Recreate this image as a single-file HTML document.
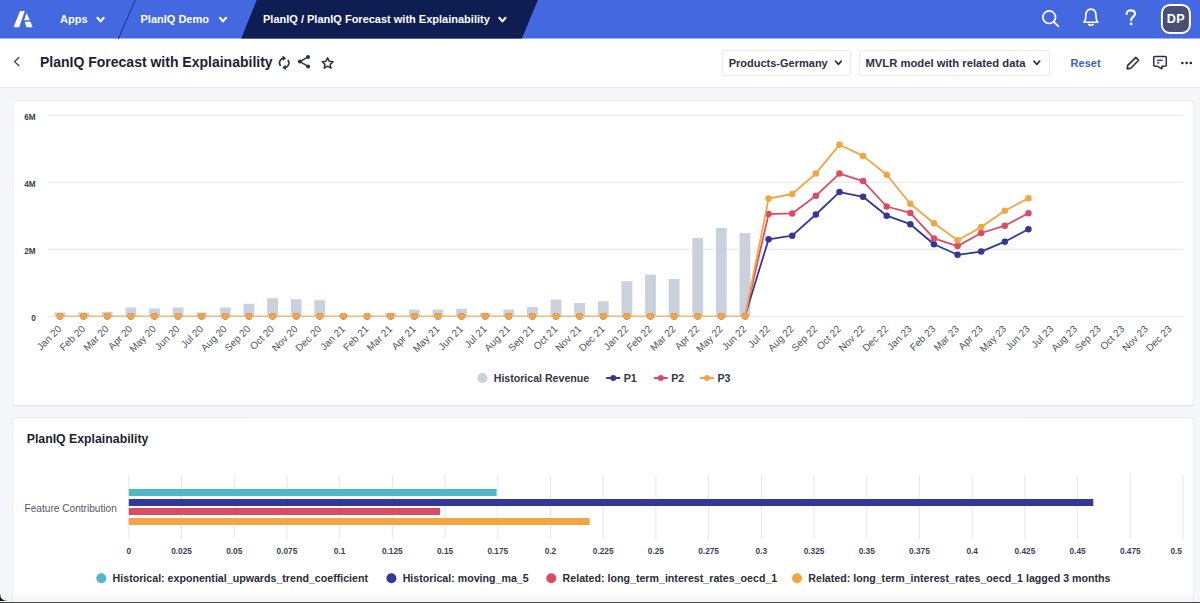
<!DOCTYPE html>
<html><head><meta charset="utf-8"><style>
*{box-sizing:border-box}
html,body{margin:0;padding:0}
body{width:1200px;height:603px;overflow:hidden;position:relative;background:#f6f7fb;font-family:"Liberation Sans",sans-serif}
.t{position:absolute;white-space:nowrap;line-height:1}
.card{position:absolute;background:#fff;border-radius:3px;box-shadow:0 0 0 0.7px #e8e9ef, 0 1px 1.5px rgba(40,45,70,0.14)}
</style></head><body>

<svg width="1200" height="39" style="position:absolute;left:0;top:0">
<rect width="1200" height="38.5" fill="#4468e0"/>
<polygon points="256.7,0 537.9,0 521.9,38.5 241.2,38.5" fill="#0e1e53"/>
<line x1="135.2" y1="0" x2="118.2" y2="39" stroke="#223a9c" stroke-width="1.1"/>
<!-- logo -->
<polygon points="20.1,10.9 24.8,10.9 19.1,27.3 13.5,27.3" fill="#fff"/>
<polygon points="26.5,13.1 29.9,20.2 24.1,20.2" fill="#fff"/>
<polygon points="24.6,21.8 30.5,21.8 32.6,27.3 26.6,27.3" fill="#fff"/>
<path d="M97.5,17.8 L100.6,21.400000000000002 L103.7,17.8" fill="none" stroke="#fff" stroke-width="2.1" stroke-linecap="round" stroke-linejoin="round"/>
<path d="M219.9,17.8 L223.0,21.400000000000002 L226.1,17.8" fill="none" stroke="#fff" stroke-width="2.1" stroke-linecap="round" stroke-linejoin="round"/>
<path d="M499.3,17.8 L502.40000000000003,21.400000000000002 L505.5,17.8" fill="none" stroke="#fff" stroke-width="2.1" stroke-linecap="round" stroke-linejoin="round"/>
<!-- search -->
<circle cx="1049.2" cy="17.2" r="6.3" fill="none" stroke="#fff" stroke-width="1.7"/>
<line x1="1053.8" y1="21.8" x2="1058.4" y2="26.3" stroke="#fff" stroke-width="1.8" stroke-linecap="round"/>
<!-- bell -->
<path d="M1083.9,22.2 C1085.6,20.6 1085.8,19 1085.8,15.9 C1085.8,11.5 1088,9.1 1090.9,9.1 C1093.8,9.1 1096,11.5 1096,15.9 C1096,19 1096.2,20.6 1097.9,22.2 Z" fill="none" stroke="#fff" stroke-width="1.6" stroke-linejoin="round"/>
<path d="M1088.7,24.3 Q1090.9,26.4 1093.1,24.3" fill="none" stroke="#fff" stroke-width="1.6" stroke-linecap="round"/>
<!-- question -->
<path d="M1126.6,13.9 C1126.6,11.5 1128.5,10.4 1130.7,10.4 C1133.1,10.4 1135,11.8 1135,14 C1135,16.5 1131.1,16.9 1131.1,20.3" fill="none" stroke="#fff" stroke-width="2.1" stroke-linecap="round"/>
<circle cx="1131.1" cy="23.9" r="1.35" fill="#fff"/>
<!-- avatar -->
<rect x="1161.9" y="4.95" width="28" height="28" rx="8" fill="#4a5074" stroke="#fff" stroke-width="2"/>
<text x="1176" y="23.3" text-anchor="middle" font-size="12.6" font-weight="700" fill="#fff" font-family="Liberation Sans" letter-spacing="0.5">DP</text>
</svg>
<div style="position:absolute;left:0;top:38.5px;width:1200px;height:49px;background:#fff;border-bottom:1px solid #e7e8ee"></div>
<span class="t" style="left:60px;top:13.6px;font-size:11px;font-weight:700;color:#fff">Apps</span>
<span class="t" style="left:140.5px;top:13.6px;font-size:11px;font-weight:700;color:#fff">PlanIQ Demo</span>
<span class="t" style="left:263px;top:13.6px;font-size:11px;font-weight:700;color:#fff">PlanIQ / PlanIQ Forecast with Explainability</span>
<span class="t" style="left:40px;top:54.5px;font-size:14px;font-weight:700;color:#1c1f30">PlanIQ Forecast with Explainability</span>
<div style="position:absolute;left:722px;top:50px;width:129px;height:26px;border:1px solid #e9ebf0;border-radius:2px;background:#fff"></div>
<span class="t" style="left:728.7px;top:58px;font-size:11px;font-weight:700;color:#2b3046">Products-Germany</span>
<div style="position:absolute;left:858.5px;top:50px;width:191px;height:26px;border:1px solid #e9ebf0;border-radius:2px;background:#fff"></div>
<span class="t" style="left:865.4px;top:58px;font-size:11.25px;font-weight:700;color:#2b3046">MVLR model with related data</span>
<span class="t" style="left:1070.6px;top:58px;font-size:11px;font-weight:700;color:#3f5cc2">Reset</span>
<div class="card" style="left:12.8px;top:100.8px;width:1180px;height:304.4px"></div>
<div class="card" style="left:12.8px;top:417.6px;width:1180px;height:200px"></div>
<span class="t" style="left:26.7px;top:433px;font-size:12.3px;font-weight:700;color:#1c1f30">PlanIQ Explainability</span>
<svg width="1200" height="603" style="position:absolute;left:0;top:0" font-family="Liberation Sans">
<!-- title bar icons -->
<path d="M19.2,57.2 L14.6,61.6 L19.2,66" fill="none" stroke="#3a3d4e" stroke-width="1.3" stroke-linecap="butt" stroke-linejoin="miter"/>
<!-- sync -->
<g transform="translate(284.2,62.9)" fill="none" stroke="#2b3046" stroke-width="1.6">
<path d="M0.5,-4.7 A4.7,4.7 0 0 0 -3.6,3"/>
<path d="M3.6,-3 A4.7,4.7 0 0 1 -0.5,4.7"/>
<path d="M-1.3,-6.9 L1.5,-4.7 L-1.3,-2.5 Z" fill="#2b3046" stroke-width="0.6" stroke-linejoin="round"/>
<path d="M1.3,6.9 L-1.5,4.7 L1.3,2.5 Z" fill="#2b3046" stroke-width="0.6" stroke-linejoin="round"/>
</g>
<!-- share -->
<g fill="#2b3046" stroke="#2b3046">
<line x1="308.1" y1="56.9" x2="299.9" y2="61.6" stroke-width="1.5"/>
<line x1="308.1" y1="66.4" x2="299.9" y2="61.6" stroke-width="1.5"/>
<circle cx="308.1" cy="56.9" r="2" stroke="none"/>
<circle cx="299.9" cy="61.6" r="2" stroke="none"/>
<circle cx="308.1" cy="66.4" r="2" stroke="none"/>
</g>
<!-- star -->
<polygon points="327.60,57.70 329.19,61.32 333.12,61.71 330.17,64.33 331.01,68.19 327.60,66.20 324.19,68.19 325.03,64.33 322.08,61.71 326.01,61.32" fill="none" stroke="#2b3046" stroke-width="1.5" stroke-linejoin="round"/>
<!-- pencil -->
<path d="M1135.8,57.4 L1138.6,60.3 L1130.8,68.3 L1127.3,68.9 L1127.7,65.4 Z" fill="none" stroke="#2b3046" stroke-width="1.6" stroke-linejoin="round"/>
<!-- comment -->
<path d="M1155,56.4 L1165,56.4 Q1166.3,56.4 1166.3,57.7 L1166.3,65 Q1166.3,66.3 1165,66.3 L1162,66.3 L1162,68.8 L1157.6,66.3 L1155,66.3 Q1153.7,66.3 1153.7,65 L1153.7,57.7 Q1153.7,56.4 1155,56.4 Z" fill="none" stroke="#2b3046" stroke-width="1.5" stroke-linejoin="round"/>
<line x1="1157" y1="60.3" x2="1162.7" y2="60.3" stroke="#2b3046" stroke-width="1.3"/>
<line x1="1157" y1="62.8" x2="1159.4" y2="62.8" stroke="#2b3046" stroke-width="1.3"/>
<!-- dots -->
<circle cx="1182.4" cy="63" r="1.25" fill="#1c1f30"/>
<circle cx="1186.6" cy="63" r="1.25" fill="#1c1f30"/>
<circle cx="1190.8" cy="63" r="1.25" fill="#1c1f30"/>
<!-- bottom-left frame corner -->
<path d="M0,593 Q0,601 8,601 L0,601 Z" fill="#1a1a1a"/>
<path d="M835.5,61.1 L838.4,64.4 L841.3,61.1" fill="none" stroke="#2b3046" stroke-width="1.6" stroke-linecap="round" stroke-linejoin="round"/>
<path d="M1033.9,61.1 L1036.8000000000002,64.4 L1039.7,61.1" fill="none" stroke="#2b3046" stroke-width="1.6" stroke-linecap="round" stroke-linejoin="round"/>
<line x1="48" y1="316.25" x2="1183" y2="316.25" stroke="#e6e6e6" stroke-width="1"/>
<text x="35.7" y="320.85" text-anchor="end" font-size="8.2" font-weight="700" fill="#3a3d4c">0</text>
<line x1="48" y1="249.25" x2="1183" y2="249.25" stroke="#e6e6e6" stroke-width="1"/>
<text x="35.7" y="253.85" text-anchor="end" font-size="8.2" font-weight="700" fill="#3a3d4c">2M</text>
<line x1="48" y1="182.25" x2="1183" y2="182.25" stroke="#e6e6e6" stroke-width="1"/>
<text x="35.7" y="186.85" text-anchor="end" font-size="8.2" font-weight="700" fill="#3a3d4c">4M</text>
<line x1="48" y1="115.25" x2="1183" y2="115.25" stroke="#e6e6e6" stroke-width="1"/>
<text x="35.7" y="119.85" text-anchor="end" font-size="8.2" font-weight="700" fill="#3a3d4c">6M</text>
<rect x="54.60" y="312.50" width="10.8" height="3.75" fill="#c9d1dc"/>
<rect x="78.22" y="312.50" width="10.8" height="3.75" fill="#c9d1dc"/>
<rect x="101.84" y="311.75" width="10.8" height="4.50" fill="#c9d1dc"/>
<rect x="125.46" y="307.50" width="10.8" height="8.75" fill="#c9d1dc"/>
<rect x="149.08" y="308.50" width="10.8" height="7.75" fill="#c9d1dc"/>
<rect x="172.70" y="307.50" width="10.8" height="8.75" fill="#c9d1dc"/>
<rect x="196.32" y="312.50" width="10.8" height="3.75" fill="#c9d1dc"/>
<rect x="219.94" y="307.50" width="10.8" height="8.75" fill="#c9d1dc"/>
<rect x="243.56" y="303.75" width="10.8" height="12.50" fill="#c9d1dc"/>
<rect x="267.18" y="298.25" width="10.8" height="18.00" fill="#c9d1dc"/>
<rect x="290.80" y="299.25" width="10.8" height="17.00" fill="#c9d1dc"/>
<rect x="314.42" y="300.25" width="10.8" height="16.00" fill="#c9d1dc"/>
<rect x="338.04" y="314.75" width="10.8" height="1.50" fill="#c9d1dc"/>
<rect x="361.66" y="315.25" width="10.8" height="1.00" fill="#c9d1dc"/>
<rect x="385.28" y="312.75" width="10.8" height="3.50" fill="#c9d1dc"/>
<rect x="408.90" y="309.50" width="10.8" height="6.75" fill="#c9d1dc"/>
<rect x="432.52" y="309.50" width="10.8" height="6.75" fill="#c9d1dc"/>
<rect x="456.14" y="308.75" width="10.8" height="7.50" fill="#c9d1dc"/>
<rect x="479.76" y="312.75" width="10.8" height="3.50" fill="#c9d1dc"/>
<rect x="503.38" y="309.50" width="10.8" height="6.75" fill="#c9d1dc"/>
<rect x="527.00" y="307.00" width="10.8" height="9.25" fill="#c9d1dc"/>
<rect x="550.62" y="299.50" width="10.8" height="16.75" fill="#c9d1dc"/>
<rect x="574.24" y="303.00" width="10.8" height="13.25" fill="#c9d1dc"/>
<rect x="597.86" y="301.25" width="10.8" height="15.00" fill="#c9d1dc"/>
<rect x="621.48" y="281.25" width="10.8" height="35.00" fill="#c9d1dc"/>
<rect x="645.10" y="274.65" width="10.8" height="41.60" fill="#c9d1dc"/>
<rect x="668.72" y="279.00" width="10.8" height="37.25" fill="#c9d1dc"/>
<rect x="692.34" y="238.00" width="10.8" height="78.25" fill="#c9d1dc"/>
<rect x="715.96" y="227.90" width="10.8" height="88.35" fill="#c9d1dc"/>
<rect x="739.58" y="233.10" width="10.8" height="83.15" fill="#c9d1dc"/>
<path d="M744.98,316.25 L768.60,239.30 L792.22,235.70 L815.84,214.50 L839.46,192.10 L863.08,196.80 L886.70,215.70 L910.32,224.20 L933.94,244.30 L957.56,254.80 L981.18,251.60 L1004.80,241.70 L1028.42,229.30" fill="none" stroke="#33379a" stroke-width="1.8" stroke-linejoin="round"/>
<circle cx="60.00" cy="316.25" r="3.25" fill="#33379a"/>
<circle cx="83.62" cy="316.25" r="3.25" fill="#33379a"/>
<circle cx="107.24" cy="316.25" r="3.25" fill="#33379a"/>
<circle cx="130.86" cy="316.25" r="3.25" fill="#33379a"/>
<circle cx="154.48" cy="316.25" r="3.25" fill="#33379a"/>
<circle cx="178.10" cy="316.25" r="3.25" fill="#33379a"/>
<circle cx="201.72" cy="316.25" r="3.25" fill="#33379a"/>
<circle cx="225.34" cy="316.25" r="3.25" fill="#33379a"/>
<circle cx="248.96" cy="316.25" r="3.25" fill="#33379a"/>
<circle cx="272.58" cy="316.25" r="3.25" fill="#33379a"/>
<circle cx="296.20" cy="316.25" r="3.25" fill="#33379a"/>
<circle cx="319.82" cy="316.25" r="3.25" fill="#33379a"/>
<circle cx="343.44" cy="316.25" r="3.25" fill="#33379a"/>
<circle cx="367.06" cy="316.25" r="3.25" fill="#33379a"/>
<circle cx="390.68" cy="316.25" r="3.25" fill="#33379a"/>
<circle cx="414.30" cy="316.25" r="3.25" fill="#33379a"/>
<circle cx="437.92" cy="316.25" r="3.25" fill="#33379a"/>
<circle cx="461.54" cy="316.25" r="3.25" fill="#33379a"/>
<circle cx="485.16" cy="316.25" r="3.25" fill="#33379a"/>
<circle cx="508.78" cy="316.25" r="3.25" fill="#33379a"/>
<circle cx="532.40" cy="316.25" r="3.25" fill="#33379a"/>
<circle cx="556.02" cy="316.25" r="3.25" fill="#33379a"/>
<circle cx="579.64" cy="316.25" r="3.25" fill="#33379a"/>
<circle cx="603.26" cy="316.25" r="3.25" fill="#33379a"/>
<circle cx="626.88" cy="316.25" r="3.25" fill="#33379a"/>
<circle cx="650.50" cy="316.25" r="3.25" fill="#33379a"/>
<circle cx="674.12" cy="316.25" r="3.25" fill="#33379a"/>
<circle cx="697.74" cy="316.25" r="3.25" fill="#33379a"/>
<circle cx="721.36" cy="316.25" r="3.25" fill="#33379a"/>
<circle cx="744.98" cy="316.25" r="3.25" fill="#33379a"/>
<circle cx="768.60" cy="239.30" r="3.25" fill="#33379a"/>
<circle cx="792.22" cy="235.70" r="3.25" fill="#33379a"/>
<circle cx="815.84" cy="214.50" r="3.25" fill="#33379a"/>
<circle cx="839.46" cy="192.10" r="3.25" fill="#33379a"/>
<circle cx="863.08" cy="196.80" r="3.25" fill="#33379a"/>
<circle cx="886.70" cy="215.70" r="3.25" fill="#33379a"/>
<circle cx="910.32" cy="224.20" r="3.25" fill="#33379a"/>
<circle cx="933.94" cy="244.30" r="3.25" fill="#33379a"/>
<circle cx="957.56" cy="254.80" r="3.25" fill="#33379a"/>
<circle cx="981.18" cy="251.60" r="3.25" fill="#33379a"/>
<circle cx="1004.80" cy="241.70" r="3.25" fill="#33379a"/>
<circle cx="1028.42" cy="229.30" r="3.25" fill="#33379a"/>
<path d="M744.98,316.25 L768.60,214.10 L792.22,213.45 L815.84,195.80 L839.46,173.60 L863.08,181.10 L886.70,206.50 L910.32,212.90 L933.94,238.40 L957.56,246.10 L981.18,233.00 L1004.80,225.70 L1028.42,213.30" fill="none" stroke="#dc4b64" stroke-width="1.8" stroke-linejoin="round"/>
<circle cx="60.00" cy="316.25" r="3.25" fill="#dc4b64"/>
<circle cx="83.62" cy="316.25" r="3.25" fill="#dc4b64"/>
<circle cx="107.24" cy="316.25" r="3.25" fill="#dc4b64"/>
<circle cx="130.86" cy="316.25" r="3.25" fill="#dc4b64"/>
<circle cx="154.48" cy="316.25" r="3.25" fill="#dc4b64"/>
<circle cx="178.10" cy="316.25" r="3.25" fill="#dc4b64"/>
<circle cx="201.72" cy="316.25" r="3.25" fill="#dc4b64"/>
<circle cx="225.34" cy="316.25" r="3.25" fill="#dc4b64"/>
<circle cx="248.96" cy="316.25" r="3.25" fill="#dc4b64"/>
<circle cx="272.58" cy="316.25" r="3.25" fill="#dc4b64"/>
<circle cx="296.20" cy="316.25" r="3.25" fill="#dc4b64"/>
<circle cx="319.82" cy="316.25" r="3.25" fill="#dc4b64"/>
<circle cx="343.44" cy="316.25" r="3.25" fill="#dc4b64"/>
<circle cx="367.06" cy="316.25" r="3.25" fill="#dc4b64"/>
<circle cx="390.68" cy="316.25" r="3.25" fill="#dc4b64"/>
<circle cx="414.30" cy="316.25" r="3.25" fill="#dc4b64"/>
<circle cx="437.92" cy="316.25" r="3.25" fill="#dc4b64"/>
<circle cx="461.54" cy="316.25" r="3.25" fill="#dc4b64"/>
<circle cx="485.16" cy="316.25" r="3.25" fill="#dc4b64"/>
<circle cx="508.78" cy="316.25" r="3.25" fill="#dc4b64"/>
<circle cx="532.40" cy="316.25" r="3.25" fill="#dc4b64"/>
<circle cx="556.02" cy="316.25" r="3.25" fill="#dc4b64"/>
<circle cx="579.64" cy="316.25" r="3.25" fill="#dc4b64"/>
<circle cx="603.26" cy="316.25" r="3.25" fill="#dc4b64"/>
<circle cx="626.88" cy="316.25" r="3.25" fill="#dc4b64"/>
<circle cx="650.50" cy="316.25" r="3.25" fill="#dc4b64"/>
<circle cx="674.12" cy="316.25" r="3.25" fill="#dc4b64"/>
<circle cx="697.74" cy="316.25" r="3.25" fill="#dc4b64"/>
<circle cx="721.36" cy="316.25" r="3.25" fill="#dc4b64"/>
<circle cx="744.98" cy="316.25" r="3.25" fill="#dc4b64"/>
<circle cx="768.60" cy="214.10" r="3.25" fill="#dc4b64"/>
<circle cx="792.22" cy="213.45" r="3.25" fill="#dc4b64"/>
<circle cx="815.84" cy="195.80" r="3.25" fill="#dc4b64"/>
<circle cx="839.46" cy="173.60" r="3.25" fill="#dc4b64"/>
<circle cx="863.08" cy="181.10" r="3.25" fill="#dc4b64"/>
<circle cx="886.70" cy="206.50" r="3.25" fill="#dc4b64"/>
<circle cx="910.32" cy="212.90" r="3.25" fill="#dc4b64"/>
<circle cx="933.94" cy="238.40" r="3.25" fill="#dc4b64"/>
<circle cx="957.56" cy="246.10" r="3.25" fill="#dc4b64"/>
<circle cx="981.18" cy="233.00" r="3.25" fill="#dc4b64"/>
<circle cx="1004.80" cy="225.70" r="3.25" fill="#dc4b64"/>
<circle cx="1028.42" cy="213.30" r="3.25" fill="#dc4b64"/>
<line x1="60.00" y1="316.25" x2="744.98" y2="316.25" stroke="#f2a541" stroke-width="1.6" stroke-opacity="0.68"/>
<path d="M744.98,316.25 L768.60,198.60 L792.22,194.00 L815.84,173.60 L839.46,144.70 L863.08,155.90 L886.70,174.75 L910.32,203.80 L933.94,223.30 L957.56,240.25 L981.18,227.10 L1004.80,210.70 L1028.42,198.30" fill="none" stroke="#f2a541" stroke-width="1.8" stroke-linejoin="round"/>
<circle cx="60.00" cy="316.25" r="3.25" fill="#f2a541"/>
<circle cx="83.62" cy="316.25" r="3.25" fill="#f2a541"/>
<circle cx="107.24" cy="316.25" r="3.25" fill="#f2a541"/>
<circle cx="130.86" cy="316.25" r="3.25" fill="#f2a541"/>
<circle cx="154.48" cy="316.25" r="3.25" fill="#f2a541"/>
<circle cx="178.10" cy="316.25" r="3.25" fill="#f2a541"/>
<circle cx="201.72" cy="316.25" r="3.25" fill="#f2a541"/>
<circle cx="225.34" cy="316.25" r="3.25" fill="#f2a541"/>
<circle cx="248.96" cy="316.25" r="3.25" fill="#f2a541"/>
<circle cx="272.58" cy="316.25" r="3.25" fill="#f2a541"/>
<circle cx="296.20" cy="316.25" r="3.25" fill="#f2a541"/>
<circle cx="319.82" cy="316.25" r="3.25" fill="#f2a541"/>
<circle cx="343.44" cy="316.25" r="3.25" fill="#f2a541"/>
<circle cx="367.06" cy="316.25" r="3.25" fill="#f2a541"/>
<circle cx="390.68" cy="316.25" r="3.25" fill="#f2a541"/>
<circle cx="414.30" cy="316.25" r="3.25" fill="#f2a541"/>
<circle cx="437.92" cy="316.25" r="3.25" fill="#f2a541"/>
<circle cx="461.54" cy="316.25" r="3.25" fill="#f2a541"/>
<circle cx="485.16" cy="316.25" r="3.25" fill="#f2a541"/>
<circle cx="508.78" cy="316.25" r="3.25" fill="#f2a541"/>
<circle cx="532.40" cy="316.25" r="3.25" fill="#f2a541"/>
<circle cx="556.02" cy="316.25" r="3.25" fill="#f2a541"/>
<circle cx="579.64" cy="316.25" r="3.25" fill="#f2a541"/>
<circle cx="603.26" cy="316.25" r="3.25" fill="#f2a541"/>
<circle cx="626.88" cy="316.25" r="3.25" fill="#f2a541"/>
<circle cx="650.50" cy="316.25" r="3.25" fill="#f2a541"/>
<circle cx="674.12" cy="316.25" r="3.25" fill="#f2a541"/>
<circle cx="697.74" cy="316.25" r="3.25" fill="#f2a541"/>
<circle cx="721.36" cy="316.25" r="3.25" fill="#f2a541"/>
<circle cx="744.98" cy="316.25" r="3.25" fill="#f2a541"/>
<circle cx="768.60" cy="198.60" r="3.25" fill="#f2a541"/>
<circle cx="792.22" cy="194.00" r="3.25" fill="#f2a541"/>
<circle cx="815.84" cy="173.60" r="3.25" fill="#f2a541"/>
<circle cx="839.46" cy="144.70" r="3.25" fill="#f2a541"/>
<circle cx="863.08" cy="155.90" r="3.25" fill="#f2a541"/>
<circle cx="886.70" cy="174.75" r="3.25" fill="#f2a541"/>
<circle cx="910.32" cy="203.80" r="3.25" fill="#f2a541"/>
<circle cx="933.94" cy="223.30" r="3.25" fill="#f2a541"/>
<circle cx="957.56" cy="240.25" r="3.25" fill="#f2a541"/>
<circle cx="981.18" cy="227.10" r="3.25" fill="#f2a541"/>
<circle cx="1004.80" cy="210.70" r="3.25" fill="#f2a541"/>
<circle cx="1028.42" cy="198.30" r="3.25" fill="#f2a541"/>
<text transform="translate(62.20,329.60) rotate(-45)" text-anchor="end" font-size="10" fill="#50525c">Jan 20</text>
<text transform="translate(85.82,329.60) rotate(-45)" text-anchor="end" font-size="10" fill="#50525c">Feb 20</text>
<text transform="translate(109.44,329.60) rotate(-45)" text-anchor="end" font-size="10" fill="#50525c">Mar 20</text>
<text transform="translate(133.06,329.60) rotate(-45)" text-anchor="end" font-size="10" fill="#50525c">Apr 20</text>
<text transform="translate(156.68,329.60) rotate(-45)" text-anchor="end" font-size="10" fill="#50525c">May 20</text>
<text transform="translate(180.30,329.60) rotate(-45)" text-anchor="end" font-size="10" fill="#50525c">Jun 20</text>
<text transform="translate(203.92,329.60) rotate(-45)" text-anchor="end" font-size="10" fill="#50525c">Jul 20</text>
<text transform="translate(227.54,329.60) rotate(-45)" text-anchor="end" font-size="10" fill="#50525c">Aug 20</text>
<text transform="translate(251.16,329.60) rotate(-45)" text-anchor="end" font-size="10" fill="#50525c">Sep 20</text>
<text transform="translate(274.78,329.60) rotate(-45)" text-anchor="end" font-size="10" fill="#50525c">Oct 20</text>
<text transform="translate(298.40,329.60) rotate(-45)" text-anchor="end" font-size="10" fill="#50525c">Nov 20</text>
<text transform="translate(322.02,329.60) rotate(-45)" text-anchor="end" font-size="10" fill="#50525c">Dec 20</text>
<text transform="translate(345.64,329.60) rotate(-45)" text-anchor="end" font-size="10" fill="#50525c">Jan 21</text>
<text transform="translate(369.26,329.60) rotate(-45)" text-anchor="end" font-size="10" fill="#50525c">Feb 21</text>
<text transform="translate(392.88,329.60) rotate(-45)" text-anchor="end" font-size="10" fill="#50525c">Mar 21</text>
<text transform="translate(416.50,329.60) rotate(-45)" text-anchor="end" font-size="10" fill="#50525c">Apr 21</text>
<text transform="translate(440.12,329.60) rotate(-45)" text-anchor="end" font-size="10" fill="#50525c">May 21</text>
<text transform="translate(463.74,329.60) rotate(-45)" text-anchor="end" font-size="10" fill="#50525c">Jun 21</text>
<text transform="translate(487.36,329.60) rotate(-45)" text-anchor="end" font-size="10" fill="#50525c">Jul 21</text>
<text transform="translate(510.98,329.60) rotate(-45)" text-anchor="end" font-size="10" fill="#50525c">Aug 21</text>
<text transform="translate(534.60,329.60) rotate(-45)" text-anchor="end" font-size="10" fill="#50525c">Sep 21</text>
<text transform="translate(558.22,329.60) rotate(-45)" text-anchor="end" font-size="10" fill="#50525c">Oct 21</text>
<text transform="translate(581.84,329.60) rotate(-45)" text-anchor="end" font-size="10" fill="#50525c">Nov 21</text>
<text transform="translate(605.46,329.60) rotate(-45)" text-anchor="end" font-size="10" fill="#50525c">Dec 21</text>
<text transform="translate(629.08,329.60) rotate(-45)" text-anchor="end" font-size="10" fill="#50525c">Jan 22</text>
<text transform="translate(652.70,329.60) rotate(-45)" text-anchor="end" font-size="10" fill="#50525c">Feb 22</text>
<text transform="translate(676.32,329.60) rotate(-45)" text-anchor="end" font-size="10" fill="#50525c">Mar 22</text>
<text transform="translate(699.94,329.60) rotate(-45)" text-anchor="end" font-size="10" fill="#50525c">Apr 22</text>
<text transform="translate(723.56,329.60) rotate(-45)" text-anchor="end" font-size="10" fill="#50525c">May 22</text>
<text transform="translate(747.18,329.60) rotate(-45)" text-anchor="end" font-size="10" fill="#50525c">Jun 22</text>
<text transform="translate(770.80,329.60) rotate(-45)" text-anchor="end" font-size="10" fill="#50525c">Jul 22</text>
<text transform="translate(794.42,329.60) rotate(-45)" text-anchor="end" font-size="10" fill="#50525c">Aug 22</text>
<text transform="translate(818.04,329.60) rotate(-45)" text-anchor="end" font-size="10" fill="#50525c">Sep 22</text>
<text transform="translate(841.66,329.60) rotate(-45)" text-anchor="end" font-size="10" fill="#50525c">Oct 22</text>
<text transform="translate(865.28,329.60) rotate(-45)" text-anchor="end" font-size="10" fill="#50525c">Nov 22</text>
<text transform="translate(888.90,329.60) rotate(-45)" text-anchor="end" font-size="10" fill="#50525c">Dec 22</text>
<text transform="translate(912.52,329.60) rotate(-45)" text-anchor="end" font-size="10" fill="#50525c">Jan 23</text>
<text transform="translate(936.14,329.60) rotate(-45)" text-anchor="end" font-size="10" fill="#50525c">Feb 23</text>
<text transform="translate(959.76,329.60) rotate(-45)" text-anchor="end" font-size="10" fill="#50525c">Mar 23</text>
<text transform="translate(983.38,329.60) rotate(-45)" text-anchor="end" font-size="10" fill="#50525c">Apr 23</text>
<text transform="translate(1007.00,329.60) rotate(-45)" text-anchor="end" font-size="10" fill="#50525c">May 23</text>
<text transform="translate(1030.62,329.60) rotate(-45)" text-anchor="end" font-size="10" fill="#50525c">Jun 23</text>
<text transform="translate(1054.24,329.60) rotate(-45)" text-anchor="end" font-size="10" fill="#50525c">Jul 23</text>
<text transform="translate(1077.86,329.60) rotate(-45)" text-anchor="end" font-size="10" fill="#50525c">Aug 23</text>
<text transform="translate(1101.48,329.60) rotate(-45)" text-anchor="end" font-size="10" fill="#50525c">Sep 23</text>
<text transform="translate(1125.10,329.60) rotate(-45)" text-anchor="end" font-size="10" fill="#50525c">Oct 23</text>
<text transform="translate(1148.72,329.60) rotate(-45)" text-anchor="end" font-size="10" fill="#50525c">Nov 23</text>
<text transform="translate(1172.34,329.60) rotate(-45)" text-anchor="end" font-size="10" fill="#50525c">Dec 23</text>
<circle cx="482.5" cy="378" r="5" fill="#c9d1dc"/>
<text x="493.75" y="382" font-size="10.6" font-weight="700" fill="#333646">Historical Revenue</text>
<line x1="606.25" y1="378" x2="620.25" y2="378" stroke="#33379a" stroke-width="2"/>
<circle cx="613.25" cy="378" r="3" fill="#33379a"/>
<text x="623.75" y="382" font-size="10.6" font-weight="700" fill="#333646">P1</text>
<line x1="653.75" y1="378" x2="667.75" y2="378" stroke="#dc4b64" stroke-width="2"/>
<circle cx="660.75" cy="378" r="3" fill="#dc4b64"/>
<text x="671.25" y="382" font-size="10.6" font-weight="700" fill="#333646">P2</text>
<line x1="700" y1="378" x2="714" y2="378" stroke="#f2a541" stroke-width="2"/>
<circle cx="707" cy="378" r="3" fill="#f2a541"/>
<text x="717.5" y="382" font-size="10.6" font-weight="700" fill="#333646">P3</text>
<line x1="128.80" y1="475" x2="128.80" y2="539" stroke="#e6e6e6" stroke-width="1"/>
<text x="128.80" y="553.8" text-anchor="middle" font-size="8.3" font-weight="700" fill="#3b3f58">0</text>
<line x1="181.51" y1="475" x2="181.51" y2="539" stroke="#e6e6e6" stroke-width="1"/>
<text x="181.51" y="553.8" text-anchor="middle" font-size="8.3" font-weight="700" fill="#3b3f58">0.025</text>
<line x1="234.22" y1="475" x2="234.22" y2="539" stroke="#e6e6e6" stroke-width="1"/>
<text x="234.22" y="553.8" text-anchor="middle" font-size="8.3" font-weight="700" fill="#3b3f58">0.05</text>
<line x1="286.93" y1="475" x2="286.93" y2="539" stroke="#e6e6e6" stroke-width="1"/>
<text x="286.93" y="553.8" text-anchor="middle" font-size="8.3" font-weight="700" fill="#3b3f58">0.075</text>
<line x1="339.64" y1="475" x2="339.64" y2="539" stroke="#e6e6e6" stroke-width="1"/>
<text x="339.64" y="553.8" text-anchor="middle" font-size="8.3" font-weight="700" fill="#3b3f58">0.1</text>
<line x1="392.35" y1="475" x2="392.35" y2="539" stroke="#e6e6e6" stroke-width="1"/>
<text x="392.35" y="553.8" text-anchor="middle" font-size="8.3" font-weight="700" fill="#3b3f58">0.125</text>
<line x1="445.06" y1="475" x2="445.06" y2="539" stroke="#e6e6e6" stroke-width="1"/>
<text x="445.06" y="553.8" text-anchor="middle" font-size="8.3" font-weight="700" fill="#3b3f58">0.15</text>
<line x1="497.77" y1="475" x2="497.77" y2="539" stroke="#e6e6e6" stroke-width="1"/>
<text x="497.77" y="553.8" text-anchor="middle" font-size="8.3" font-weight="700" fill="#3b3f58">0.175</text>
<line x1="550.48" y1="475" x2="550.48" y2="539" stroke="#e6e6e6" stroke-width="1"/>
<text x="550.48" y="553.8" text-anchor="middle" font-size="8.3" font-weight="700" fill="#3b3f58">0.2</text>
<line x1="603.19" y1="475" x2="603.19" y2="539" stroke="#e6e6e6" stroke-width="1"/>
<text x="603.19" y="553.8" text-anchor="middle" font-size="8.3" font-weight="700" fill="#3b3f58">0.225</text>
<line x1="655.90" y1="475" x2="655.90" y2="539" stroke="#e6e6e6" stroke-width="1"/>
<text x="655.90" y="553.8" text-anchor="middle" font-size="8.3" font-weight="700" fill="#3b3f58">0.25</text>
<line x1="708.61" y1="475" x2="708.61" y2="539" stroke="#e6e6e6" stroke-width="1"/>
<text x="708.61" y="553.8" text-anchor="middle" font-size="8.3" font-weight="700" fill="#3b3f58">0.275</text>
<line x1="761.32" y1="475" x2="761.32" y2="539" stroke="#e6e6e6" stroke-width="1"/>
<text x="761.32" y="553.8" text-anchor="middle" font-size="8.3" font-weight="700" fill="#3b3f58">0.3</text>
<line x1="814.03" y1="475" x2="814.03" y2="539" stroke="#e6e6e6" stroke-width="1"/>
<text x="814.03" y="553.8" text-anchor="middle" font-size="8.3" font-weight="700" fill="#3b3f58">0.325</text>
<line x1="866.74" y1="475" x2="866.74" y2="539" stroke="#e6e6e6" stroke-width="1"/>
<text x="866.74" y="553.8" text-anchor="middle" font-size="8.3" font-weight="700" fill="#3b3f58">0.35</text>
<line x1="919.45" y1="475" x2="919.45" y2="539" stroke="#e6e6e6" stroke-width="1"/>
<text x="919.45" y="553.8" text-anchor="middle" font-size="8.3" font-weight="700" fill="#3b3f58">0.375</text>
<line x1="972.16" y1="475" x2="972.16" y2="539" stroke="#e6e6e6" stroke-width="1"/>
<text x="972.16" y="553.8" text-anchor="middle" font-size="8.3" font-weight="700" fill="#3b3f58">0.4</text>
<line x1="1024.87" y1="475" x2="1024.87" y2="539" stroke="#e6e6e6" stroke-width="1"/>
<text x="1024.87" y="553.8" text-anchor="middle" font-size="8.3" font-weight="700" fill="#3b3f58">0.425</text>
<line x1="1077.58" y1="475" x2="1077.58" y2="539" stroke="#e6e6e6" stroke-width="1"/>
<text x="1077.58" y="553.8" text-anchor="middle" font-size="8.3" font-weight="700" fill="#3b3f58">0.45</text>
<line x1="1130.29" y1="475" x2="1130.29" y2="539" stroke="#e6e6e6" stroke-width="1"/>
<text x="1130.29" y="553.8" text-anchor="middle" font-size="8.3" font-weight="700" fill="#3b3f58">0.475</text>
<line x1="1183.00" y1="475" x2="1183.00" y2="539" stroke="#e6e6e6" stroke-width="1"/>
<text x="1182.00" y="553.8" text-anchor="end" font-size="8.3" font-weight="700" fill="#3b3f58">0.5</text>
<rect x="128.80" y="489" width="367.80" height="7" fill="#52b7c9"/>
<rect x="128.80" y="499" width="964.50" height="7" fill="#33379a"/>
<rect x="128.80" y="508" width="311.20" height="7" fill="#dc4b64"/>
<rect x="128.80" y="518" width="460.80" height="7" fill="#f2a541"/>
<text x="24.5" y="511.5" font-size="10.15" fill="#555760">Feature Contribution</text>
<circle cx="101.3" cy="578.2" r="5" fill="#52b7c9"/>
<text x="112.60" y="582" font-size="10.65" font-weight="700" fill="#2a2c36">Historical: exponential_upwards_trend_coefficient</text>
<circle cx="391.4" cy="578.2" r="5" fill="#33379a"/>
<text x="402.70" y="582" font-size="10.65" font-weight="700" fill="#2a2c36">Historical: moving_ma_5</text>
<circle cx="551.3" cy="578.2" r="5" fill="#dc4b64"/>
<text x="562.60" y="582" font-size="10.65" font-weight="700" fill="#2a2c36">Related: long_term_interest_rates_oecd_1</text>
<circle cx="797" cy="578.2" r="5" fill="#f2a541"/>
<text x="808.30" y="582" font-size="10.65" font-weight="700" fill="#2a2c36">Related: long_term_interest_rates_oecd_1 lagged 3 months</text>
</svg>
<div style="position:absolute;left:13px;top:592px;width:1180px;height:8.6px;background:linear-gradient(#ffffff,#f4f4f4)"></div>
<div style="position:absolute;left:0;top:601.6px;width:1200px;height:1.4px;background:#444446"></div>
</body></html>
